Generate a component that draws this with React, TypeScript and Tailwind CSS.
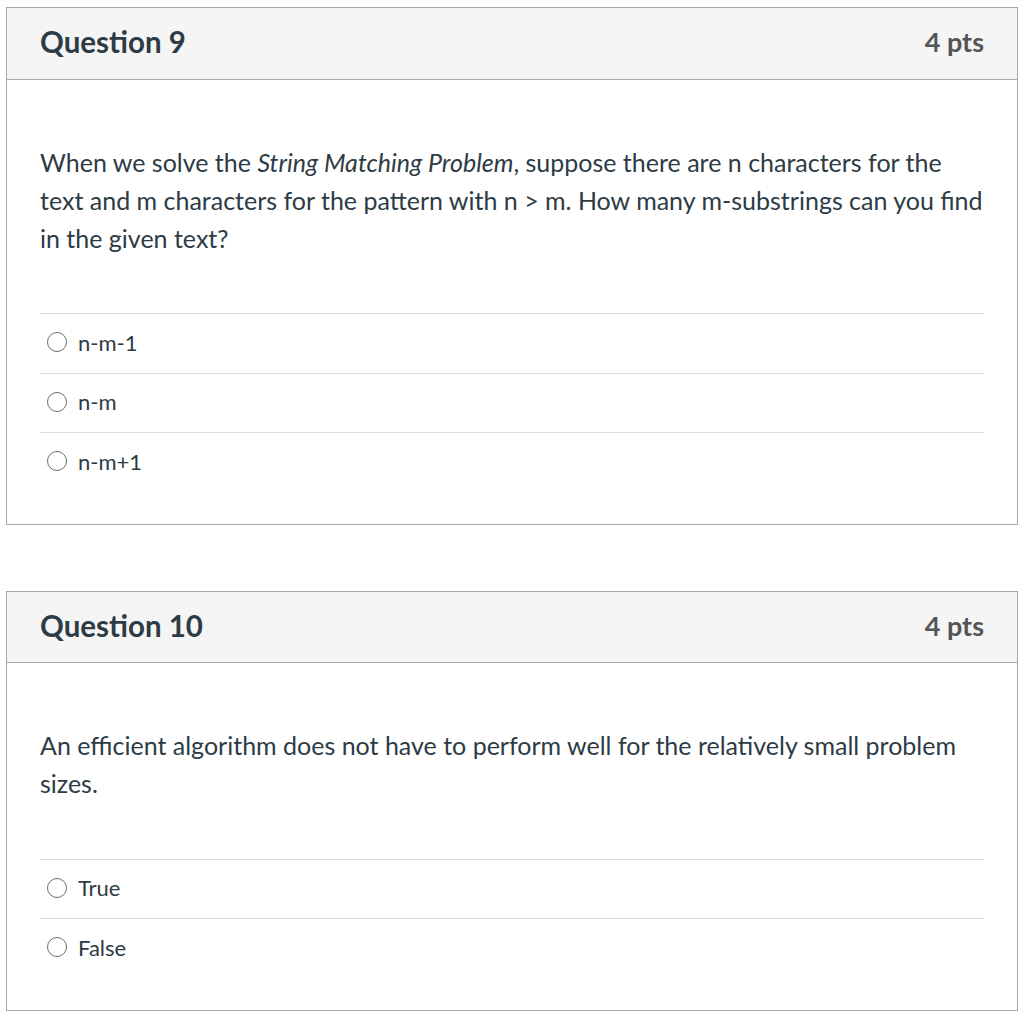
import React from "react";

type Question = {
  title: string;
  points: string;
  body: React.ReactNode;
  options: string[];
};

const questions: Question[] = [
  {
    title: "Question 9",
    points: "4 pts",
    body: (
      <>
        When we solve the <em>String Matching Problem</em>, suppose there are n characters for the
        text and m characters for the pattern with n &gt; m. How many m-substrings can you find in
        the given text?
      </>
    ),
    options: ["n-m-1", "n-m", "n-m+1"],
  },
  {
    title: "Question 10",
    points: "4 pts",
    body: (
      <>
        An efficient algorithm does not have to perform well for the relatively small problem
        sizes.
      </>
    ),
    options: ["True", "False"],
  },
];

function QuestionCard({ q }: { q: Question }) {
  return (
    <div className="border border-[#aaaaaa] bg-white">
      <div className="flex items-center justify-between h-[71.5px] pb-[2px] px-[33px] bg-[#f5f5f5] border-b border-[#aaaaaa]">
        <h2 className="text-[29.5px] font-bold text-[#2d3b45]">{q.title}</h2>
        <span className="text-[27px] font-bold text-[#555]">{q.points}</span>
      </div>
      <div className="px-[33px] pt-[63px] pb-[32px]">
        <p className="text-[25px] leading-[38px] text-[#2d3b45]">{q.body}</p>
        <div className="mt-[56.5px]">
          {q.options.map((opt) => (
            <label
              key={opt}
              className="flex items-center h-[59.5px] border-t border-[#dcdcdc] pl-[7px] pb-[2px]"
            >
              <span className="w-[20px] h-[20px] rounded-full border-[1.5px] border-[#6b6b6b] bg-white" />
              <span className="ml-[11px] text-[22px] text-[#2d3b45]">{opt}</span>
            </label>
          ))}
        </div>
      </div>
    </div>
  );
}

export default function App() {
  return (
    <div className="min-h-[1018px] bg-white pt-[7px] pl-[6px] pr-[6px] font-['Lato',sans-serif]">
      <div className="flex flex-col gap-[66px]">
        {questions.map((q) => (
          <QuestionCard key={q.title} q={q} />
        ))}
      </div>
    </div>
  );
}
